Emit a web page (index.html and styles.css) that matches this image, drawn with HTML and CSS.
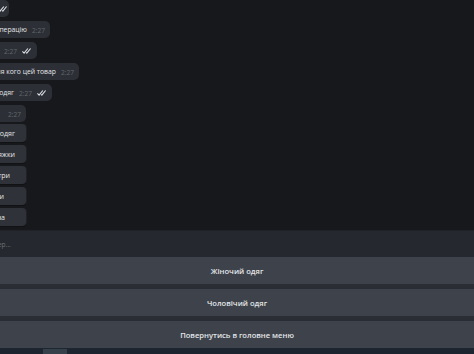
FILE: index.html
```html
<!DOCTYPE html>
<html lang="uk">
<head>
<meta charset="utf-8">
<link rel="stylesheet" href="styles.css">
</head>
<body>
<div class="app">
  <div class="chat">
    <div class="bubble w8"><svg class="ticks" viewBox="0 0 12 7"><path d="M0.5 4l2 2 4.5-5.5M5 5.2l0.8 0.8 4.5-5.5" /></svg></div>
    <div class="bubble w50"><span class="txt">Оберіть операцію</span><span class="time">2:27</span></div>
    <div class="bubble w36"><span class="time">2:27</span><svg class="ticks" viewBox="0 0 12 7"><path d="M0.5 4l2 2 4.5-5.5M5 5.2l0.8 0.8 4.5-5.5" /></svg></div>
    <div class="bubble w79"><span class="txt">Оберіть для кого цей товар</span><span class="time">2:27</span></div>
    <div class="bubble w52"><span class="txt">Жіночий одяг</span><span class="time">2:27</span><svg class="ticks" viewBox="0 0 12 7"><path d="M0.5 4l2 2 4.5-5.5M5 5.2l0.8 0.8 4.5-5.5" /></svg></div>
    <div class="bubble w26"><span class="time">2:27</span></div>
    <div class="inline">
      <div class="ibtn p11">Верхній одяг</div>
      <div class="ibtn p11">Сумки і пряжки</div>
      <div class="ibtn p16">Светри</div>
      <div class="ibtn p22">Шорти</div>
      <div class="ibtn p21">Білизна</div>
    </div>
  </div>
  <div class="input"><span class="ph">Написати повідомлення бот­ер...</span></div>
  <div class="keyboard">
    <div class="kbtn">Жіночий одяг</div>
    <div class="kbtn">Чоловічий одяг</div>
    <div class="kbtn">Повернутись в головне меню</div>
  </div>
  <div class="bottom"><span class="thumb"></span></div>
</div>
</body>
</html>
```
FILE: styles.css
```css
* { box-sizing: border-box; }
html, body { margin: 0; padding: 0; }
body {
  background: #17181c;
  font-family: "Open Sans", "Noto Sans", sans-serif;
  width: 474px;
  height: 354px;
  overflow: hidden;
}
.app {
  display: flex;
  flex-direction: column;
  height: 354px;
}
.chat {
  height: 230px;
  background: #17181c;
  display: flex;
  flex-direction: column;
  justify-content: flex-end;
  gap: 4px;
  padding-bottom: 4px;
  overflow: hidden;
}
.bubble {
  height: 17px;
  background: #2c2f35;
  border-radius: 0 5px 5px 0;
  display: flex;
  align-items: center;
  justify-content: flex-end;
  overflow: hidden;
  padding-right: 5px;
  flex-shrink: 0;
}
.w8 { width: 9px; padding-right: 1px; }
.w50 { width: 50px; }
.w36 { width: 37px; }
.w79 { width: 79px; }
.w52 { width: 52px; }
.w26 { width: 26px; }
.txt {
  flex-shrink: 0;
  white-space: nowrap;
  font-size: 6.8px;
  color: #e4e6ea;
  margin-right: 5px;
}
.time {
  flex-shrink: 0;
  white-space: nowrap;
  font-size: 6.6px;
  color: #62676e;
  padding-top: 2px;
}
.ticks {
  flex-shrink: 0;
  width: 10px;
  height: 6px;
  margin-left: 5px;
  fill: none;
  stroke: #d8dce1;
  stroke-width: 1.4;
}
.inline {
  display: flex;
  flex-direction: column;
  gap: 3px;
  margin-top: -2px;
}
.ibtn {
  width: 26px;
  height: 18px;
  background: #2f3238;
  border-radius: 0 4px 4px 0;
  box-shadow: 0 1px 0 #111214, 1px 0 0 #1f2125;
  display: flex;
  align-items: center;
  justify-content: flex-end;
  overflow: hidden;
  white-space: nowrap;
  font-size: 7px;
  color: #e4e6ea;
}
.p11 { padding-right: 11px; }
.p16 { padding-right: 16px; }
.p21 { padding-right: 21px; }
.p22 { padding-right: 22px; }
.input {
  height: 27px;
  background: #25282e;
  border-top: 1px solid #202227;
  display: flex;
  align-items: center;
  overflow: hidden;
}
.ph {
  flex-shrink: 0;
  font-size: 6.6px;
  color: #6c7178;
  margin-left: -93px;
  white-space: nowrap;
}
.keyboard {
  height: 91px;
  background: #2a2e34;
  display: flex;
  flex-direction: column;
  gap: 5px;
}
.kbtn {
  height: 27px;
  background: #3e434b;
  display: flex;
  align-items: center;
  justify-content: center;
  font-size: 7.6px;
  font-weight: 600;
  color: #e3e5e8;
  flex-shrink: 0;
}
.bottom {
  flex: 1;
  background: #1d2630;
  position: relative;
}
.thumb {
  position: absolute;
  left: 43px;
  top: 1px;
  width: 24px;
  height: 5px;
  background: #36404b;
}
```
